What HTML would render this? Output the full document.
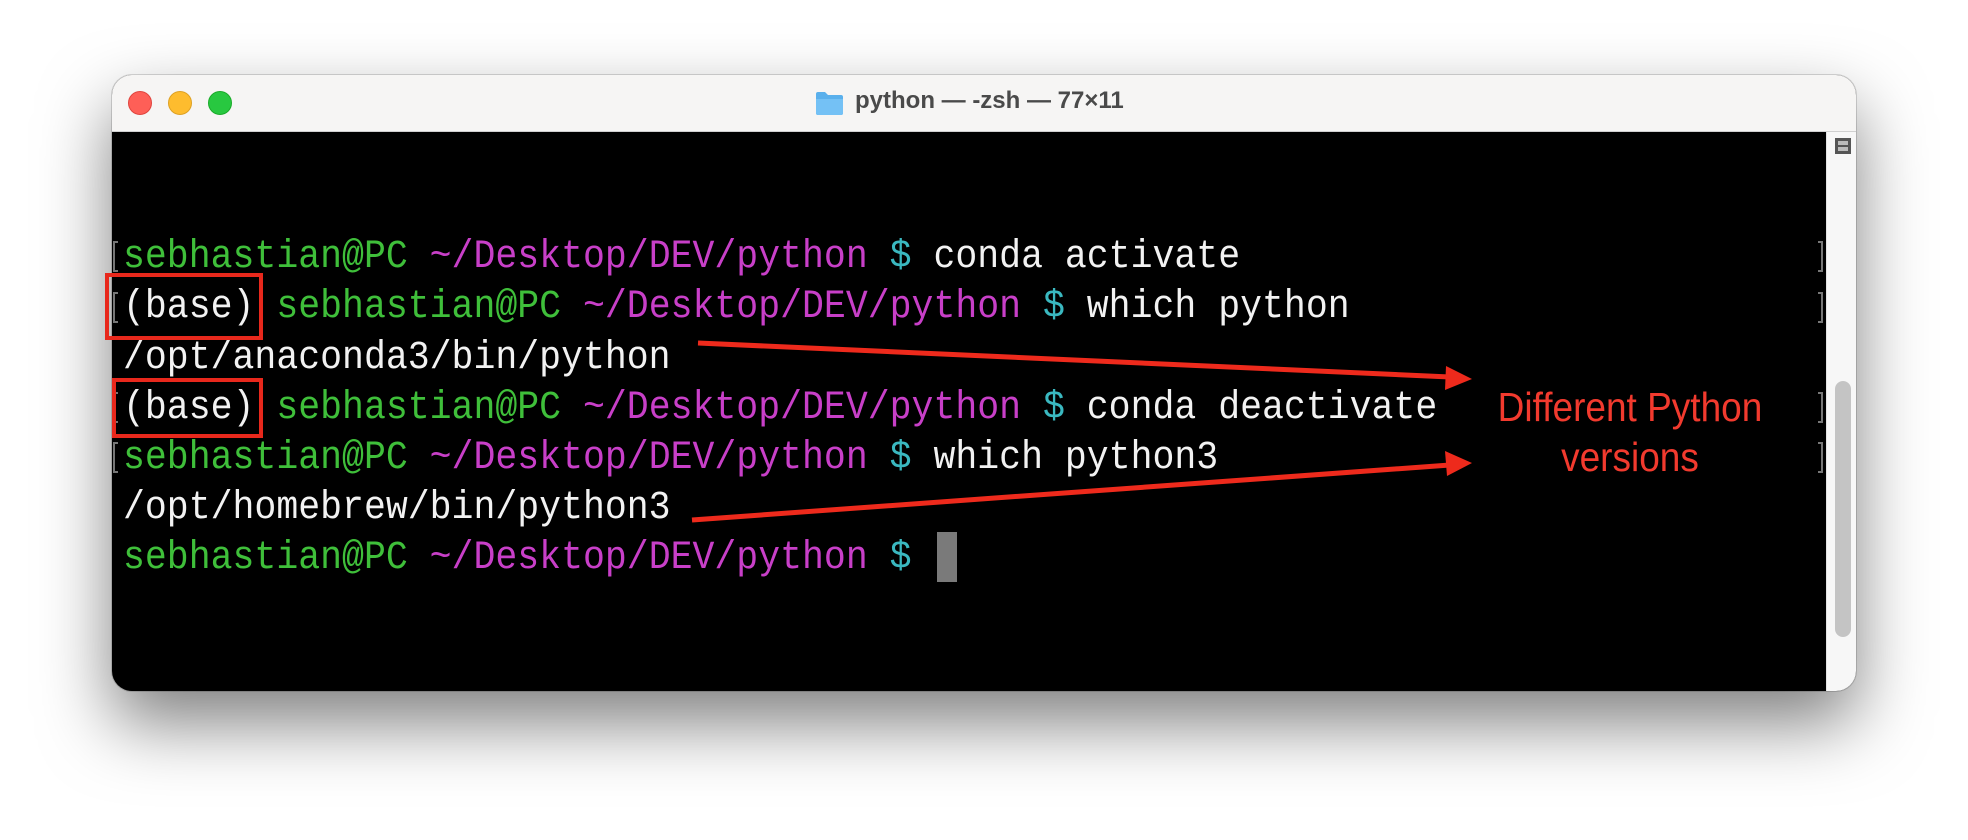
<!DOCTYPE html>
<html><head><meta charset="utf-8"><style>
*{margin:0;padding:0;box-sizing:border-box}
body{width:1968px;height:840px;background:#fff;position:relative;overflow:hidden;font-family:"Liberation Sans",sans-serif}
.win{position:absolute;left:112px;top:75px;width:1744px;height:616px;border-radius:20px;background:#000;box-shadow:0 32px 70px rgba(0,0,0,0.5),0 0 0 1px rgba(0,0,0,0.15);overflow:hidden}
.tb{position:absolute;left:0;top:0;width:100%;height:57px;background:#f6f5f4;border-bottom:1px solid #d0d0d0}
.dot{position:absolute;top:16px;width:24px;height:24px;border-radius:50%}
.title{position:absolute;left:743px;top:12px;font-weight:bold;font-size:24px;color:#4a4a4a;white-space:nowrap}
.sb{position:absolute;left:1714px;top:57px;width:30px;height:559px;background:#f7f7f7;border-left:1px solid #e3e3e3}
.thumb{position:absolute;left:8px;top:249px;width:16px;height:256px;border-radius:8px;background:#c4c4c4}
.ico{position:absolute;left:8px;top:6px;width:16px;height:16px;background:#555;padding:3px 3px}
.ico i{display:block;height:4px;background:#bbb;margin-bottom:2px}
.l{position:absolute;left:123px;font-family:"Liberation Mono",monospace;font-size:36.5px;line-height:50px;white-space:pre;color:#f2f2f2;transform:scaleY(1.1);transform-origin:0 35px}
.g{color:#3fbf3a}.m{color:#c83fc8}.c{color:#3ab8c0}
.br{position:absolute;width:5px;height:31px;border:2px solid #777}
.bl{border-right:none}.brr{border-left:none;left:1818px}
.box{position:absolute;border:4px solid #e8281c}
.ann{position:absolute;left:1480px;width:300px;text-align:center;color:#f23a2e;font-size:37px;line-height:50px;transform:scaleY(1.1)}
</style></head><body>
<div class="win">
 <div class="tb">
  <div class="dot" style="left:16px;background:#fe5f57;border:1px solid #e0443e"></div>
  <div class="dot" style="left:56px;background:#febc2e;border:1px solid #dea123"></div>
  <div class="dot" style="left:96px;background:#28c840;border:1px solid #1aab29"></div>
  <svg style="position:absolute;left:703px;top:16px" width="29" height="25" viewBox="0 0 29 25"><path d="M1 3a2 2 0 0 1 2-2h7l3 3h13a2 2 0 0 1 2 2v16a2 2 0 0 1-2 2H3a2 2 0 0 1-2-2z" fill="#5ab0ec"/><path d="M1 8h27v14a2 2 0 0 1-2 2H3a2 2 0 0 1-2-2z" fill="#74c1f5"/></svg>
  <div class="title">python — -zsh — 77×11</div>
 </div>
 <div class="sb"><div class="ico"><i></i><i></i></div><div class="thumb"></div></div>
</div>
<div class="l" style="top:233px"><span class="g">sebhastian@PC</span> <span class="m">~/Desktop/DEV/python</span> <span class="c">$</span> conda activate</div>
<div class="l" style="top:283px">(base) <span class="g">sebhastian@PC</span> <span class="m">~/Desktop/DEV/python</span> <span class="c">$</span> which python</div>
<div class="l" style="top:334px">/opt/anaconda3/bin/python</div>
<div class="l" style="top:384px">(base) <span class="g">sebhastian@PC</span> <span class="m">~/Desktop/DEV/python</span> <span class="c">$</span> conda deactivate</div>
<div class="l" style="top:434px"><span class="g">sebhastian@PC</span> <span class="m">~/Desktop/DEV/python</span> <span class="c">$</span> which python3</div>
<div class="l" style="top:484px">/opt/homebrew/bin/python3</div>
<div class="l" style="top:534px"><span class="g">sebhastian@PC</span> <span class="m">~/Desktop/DEV/python</span> <span class="c">$</span></div>
<div style="position:absolute;left:937px;top:532px;width:20px;height:50px;background:#7a7a7a"></div>
<div class="br bl" style="left:113px;top:241px"></div>
<div class="br bl" style="left:113px;top:292px"></div>
<div class="br bl" style="left:113px;top:392px"></div>
<div class="br bl" style="left:113px;top:442px"></div>
<div class="br brr" style="top:241px"></div>
<div class="br brr" style="top:292px"></div>
<div class="br brr" style="top:392px"></div>
<div class="br brr" style="top:442px"></div>
<div class="box" style="left:105px;top:273px;width:158px;height:67px"></div>
<div class="box" style="left:112px;top:378px;width:151px;height:60px"></div>
<svg style="position:absolute;left:0;top:0" width="1968" height="840">
<line x1="698" y1="343" x2="1450" y2="377" stroke="#ee2a1c" stroke-width="5"/>
<polygon points="1472,379 1446,366 1445,390" fill="#ee2a1c"/>
<line x1="692" y1="520" x2="1450" y2="465" stroke="#ee2a1c" stroke-width="5"/>
<polygon points="1472,463 1445,451 1447,476" fill="#ee2a1c"/>
</svg>
<div class="ann" style="top:383px">Different Python</div>
<div class="ann" style="top:433px">versions</div>
</body></html>
